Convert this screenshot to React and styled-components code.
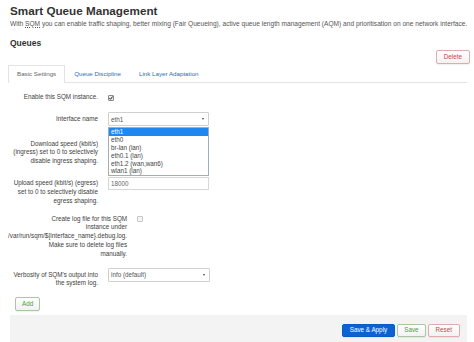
import React from "react";
import styled, { createGlobalStyle, css } from "styled-components";

const Global = createGlobalStyle`
  html, body { margin: 0; padding: 0; overflow: hidden; background: #fff; }
  body { font-family: "Liberation Sans", Arial, sans-serif; color: #404040; }
  * { box-sizing: border-box; }
`;

const Page = styled.div`
  width: 474px;
  height: 342px;
  padding: 0 4px 0 8px;
  display: flex;
  flex-direction: column;
`;

const Header = styled.header`
  padding-left: 2px;
`;

const Title = styled.h2`
  margin: 0;
  padding-top: 4px;
  font-size: 11.7px;
  line-height: 14px;
  font-weight: bold;
  color: #333;
`;

const Desc = styled.p`
  margin: 2px 0 0;
  font-size: 6.6px;
  line-height: 8px;
  color: #555;
  white-space: nowrap;
`;

const Abbr = styled.abbr`
  text-decoration: underline dotted;
`;

const SectionTitle = styled.h3`
  margin: 9.5px 0 0;
  font-size: 8.5px;
  line-height: 10px;
  font-weight: bold;
  color: #333;
`;

const Actions = styled.div`
  display: flex;
  justify-content: flex-end;
  margin-top: 2.5px;
`;

const variants = {
  negative: css`
    color: #c4484a;
    border-color: #e0abab;
    background: linear-gradient(#ffffff, #f2f2f2);
  `,
  positive: css`
    color: #4f9a46;
    border-color: #aac7a3;
    background: linear-gradient(#ffffff, #f2f2f2);
  `,
  primary: css`
    color: #fff;
    border-color: #0a5cc4;
    background: #0b63d3;
  `,
};

const Button = styled.button`
  font-family: inherit;
  font-size: 6.3px;
  line-height: 1;
  height: ${(p) => p.$h || 14}px;
  padding: 0 ${(p) => p.$px || 6}px;
  border: 1px solid;
  border-radius: 2px;
  box-shadow: 0 1px 1px rgba(0, 0, 0, 0.06);
  cursor: pointer;
  ${(p) => variants[p.$variant]}
`;

const Tabs = styled.ul`
  display: flex;
  margin: 1px 3px 0 0;
  padding: 0;
  list-style: none;
  height: 18px;
  border-bottom: 1px solid #e3e3e3;
`;

const Tab = styled.li`
  height: 18px;
  padding: 0 8px;
  border: 1px solid transparent;
  border-bottom: none;
  font-size: 6.2px;
  line-height: 15px;
  color: #2a6cb8;
  ${(p) =>
    p.$active &&
    css`
      border-color: #e3e3e3;
      background: #fff;
      color: #666;
    `}
`;

const Form = styled.div`
  display: flex;
  flex-direction: column;
`;

const Row = styled.div`
  display: flex;
  align-items: flex-start;
  gap: 10px;
  margin-top: ${(p) => p.$mt}px;
`;

const Label = styled.label`
  flex: 0 0 90px;
  text-align: right;
  font-size: 6.3px;
  line-height: 8.8px;
  padding-top: 2.6px;
  color: #404040;
  white-space: nowrap;
`;

const Field = styled.div`
  position: relative;
  min-height: 14px;
  display: flex;
  align-items: center;
`;

const Select = styled.div`
  width: ${(p) => p.$w || 101}px;
  height: 14px;
  border: 1px solid #d0d0d0;
  border-radius: 1px;
  background: #fff;
  display: flex;
  align-items: center;
  justify-content: space-between;
  padding: 0 4px 0 2px;
  font-size: 6.3px;
  color: #555;
`;

const Caret = styled.span`
  width: 0;
  height: 0;
  border-left: 1.5px solid transparent;
  border-right: 1.5px solid transparent;
  border-top: 2px solid #444;
`;

const Input = styled.div`
  width: 101px;
  height: 13px;
  border: 1px solid #d6d6d6;
  background: #fff;
  display: flex;
  align-items: center;
  padding-left: 2px;
  font-size: 6.3px;
  color: #666;
`;

const Dropdown = styled.ul`
  position: absolute;
  left: 0;
  top: 15px;
  width: 101px;
  margin: 0;
  padding: 0;
  list-style: none;
  border: 1px solid #a3acb9;
  background: #fff;
  z-index: 2;
`;

const Option = styled.li`
  height: 7.9px;
  line-height: 7.9px;
  padding-left: 2px;
  font-size: 6.3px;
  color: #444;
  ${(p) =>
    p.$selected &&
    css`
      background: #1e88f0;
      color: #fff;
    `}
`;

const Box = styled.span`
  width: 6px;
  height: 6px;
  border: 1px solid ${(p) => (p.$checked ? "#8a8a8a" : "#c6c6c6")};
  border-radius: 1px;
  background: ${(p) => (p.$checked ? "#eeeeee" : "#f6f6f6")};
  display: flex;
  align-items: center;
  justify-content: center;
`;

const AddRow = styled.div`
  display: flex;
  margin: 8.8px 0 0 7px;
`;

const Footer = styled.footer`
  height: 27px;
  margin: 4px 3px 0 2px;
  padding: 9px 7px 0 0;
  background: #f3f3f3;
  display: flex;
  justify-content: flex-end;
  align-items: flex-start;
  gap: 2px;
`;

function Checkbox({ checked }) {
  return (
    <Box $checked={checked}>
      {checked && (
        <svg width="4" height="4" viewBox="0 0 4 4">
          <path d="M0.4 2.1 L1.5 3.3 L3.6 0.5" fill="none" stroke="#222" strokeWidth="1" />
        </svg>
      )}
    </Box>
  );
}

const ifaces = ["eth1", "eth0", "br-lan (lan)", "eth0.1 (lan)", "eth1.2 (wan,wan6)", "wlan1 (lan)"];

export default function App() {
  return (
    <Page>
      <Global />
      <Header>
        <Title>Smart Queue Management</Title>
        <Desc>
          With <Abbr title="Smart Queue Management">SQM</Abbr> you can enable traffic shaping, better mixing (Fair
          Queueing), active queue length management (AQM) and prioritisation on one network interface.
        </Desc>
        <SectionTitle>Queues</SectionTitle>
      </Header>
      <Actions>
        <Button $variant="negative" $px={7}>Delete</Button>
      </Actions>
      <Tabs>
        <Tab $active>Basic Settings</Tab>
        <Tab>Queue Discipline</Tab>
        <Tab>Link Layer Adaptation</Tab>
      </Tabs>
      <Form>
        <Row $mt={7.5}>
          <Label>Enable this SQM instance.</Label>
          <Field>
            <Checkbox checked />
          </Field>
        </Row>
        <Row $mt={7.5}>
          <Label>Interface name</Label>
          <Field>
            <Select>
              <span>eth1</span>
              <Caret />
            </Select>
            <Dropdown>
              {ifaces.map((n, i) => (
                <Option key={n} $selected={i === 0}>{n}</Option>
              ))}
            </Dropdown>
          </Field>
        </Row>
        <Row $mt={11}>
          <Label>
            Download speed (kbit/s)<br />
            (ingress) set to 0 to selectively<br />
            disable ingress shaping.
          </Label>
          <Field>
            <Input />
          </Field>
        </Row>
        <Row $mt={10.5}>
          <Label>
            Upload speed (kbit/s) (egress)<br />
            set to 0 to selectively disable<br />
            egress shaping.
          </Label>
          <Field>
            <Input>18000</Input>
          </Field>
        </Row>
        <Row $mt={6.5}>
          <Label>
            Create log file for this SQM<br />
            instance under<br />
            /var/run/sqm/${"{interface_name}"}.debug.log.<br />
            Make sure to delete log files<br />
            manually.
          </Label>
          <Field>
            <Checkbox />
          </Field>
        </Row>
        <Row $mt={9.4}>
          <Label>
            Verbosity of SQM's output into<br />
            the system log.
          </Label>
          <Field>
            <Select $w={102}>
              <span>info (default)</span>
              <Caret />
            </Select>
          </Field>
        </Row>
      </Form>
      <AddRow>
        <Button $variant="positive" $px={6}>Add</Button>
      </AddRow>
      <Footer>
        <Button $variant="primary" $h={13} $px={7}>Save &amp; Apply</Button>
        <Button $variant="positive" $h={13} $px={6}>Save</Button>
        <Button $variant="negative" $h={13} $px={7}>Reset</Button>
      </Footer>
    </Page>
  );
}
